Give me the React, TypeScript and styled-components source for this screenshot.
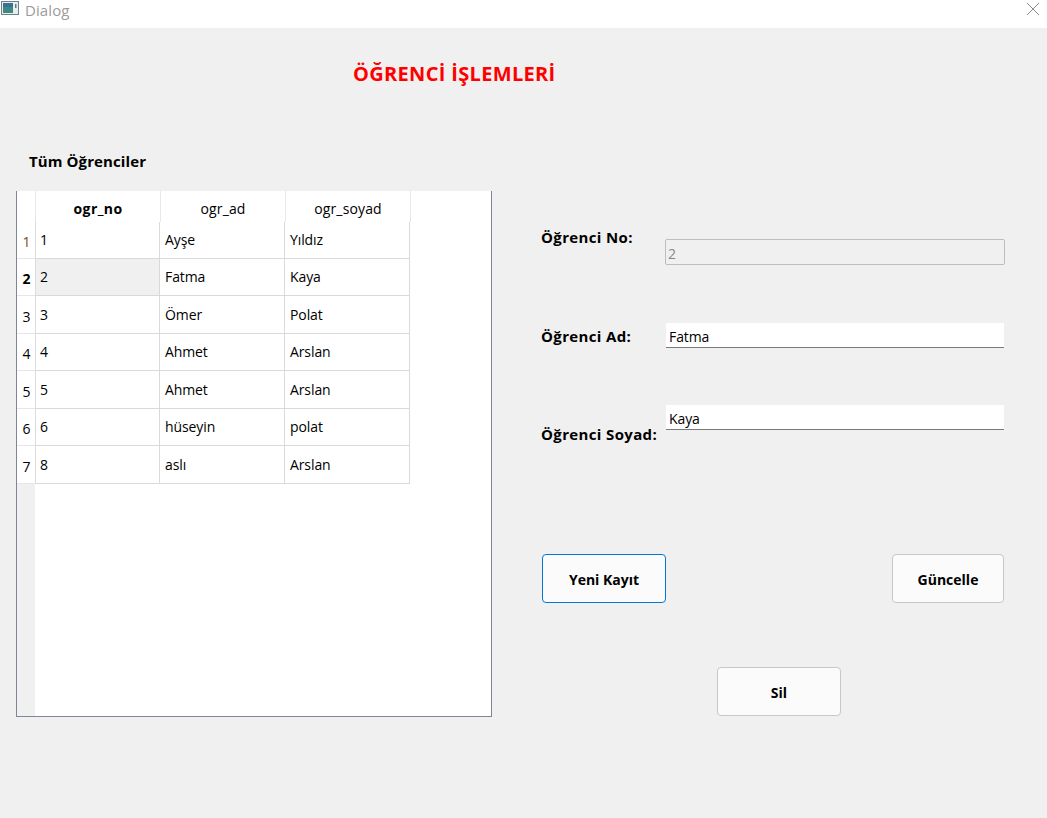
import React from "react";
import styled, { createGlobalStyle } from "styled-components";

const Global = createGlobalStyle`
  html, body { margin: 0; padding: 0; background: #f0f0f0; }
  body { font-family: "Open Sans", "Noto Sans", sans-serif; color: #000; }
`;

const Window = styled.div`
  width: 1047px;
  height: 818px;
  overflow: hidden;
  display: flex;
  flex-direction: column;
  background: #f0f0f0;
`;

const TitleBar = styled.div`
  height: 28px;
  flex: none;
  background: #fff;
  display: flex;
  align-items: flex-start;
  padding: 0 7px 0 1px;
  box-sizing: border-box;
`;

const AppIcon = styled.svg`
  width: 19px;
  height: 16px;
  margin-top: 0;
  flex: none;
`;

const TitleText = styled.div`
  font-size: 15px;
  line-height: 20px;
  color: #9c9c9c;
  margin-left: 5px;
  letter-spacing: 0.1px;
`;

const CloseIcon = styled.svg`
  width: 14px;
  height: 14px;
  margin-left: auto;
  margin-top: 2px;
`;

const Heading = styled.h1`
  margin: 32px 0 0 353px;
  font-size: 20px;
  line-height: 27px;
  font-weight: 700;
  color: #ff0000;
  letter-spacing: 0.33px;
`;

const Main = styled.div`
  display: flex;
  margin-top: 64px;
  padding-left: 16px;
`;

const LeftColumn = styled.section`
  width: 476px;
  flex: none;
`;

const SectionLabel = styled.div`
  font-size: 15px;
  line-height: 20px;
  font-weight: 700;
  letter-spacing: 0.1px;
  margin-left: 13px;
  margin-bottom: 20px;
`;

const TableFrame = styled.div`
  width: 476px;
  height: 526px;
  box-sizing: border-box;
  background: #fff;
  border-left: 1px solid #7f8594;
  border-right: 1px solid #7f8594;
  border-bottom: 1px solid #7f8594;
  display: flex;
`;

const RowHeader = styled.div`
  width: 18px;
  flex: none;
  background: #f0f0f0;
  display: flex;
  flex-direction: column;
`;

const HeaderCorner = styled.div`
  height: 31px;
  background: #fff;
`;

const RowNumber = styled.div<{ $h: number; $current?: boolean; $orange?: boolean }>`
  height: ${(p) => p.$h}px;
  box-sizing: border-box;
  background: #fff;
  border-bottom: 1px solid #e6e6e6;
  font-size: 14px;
  font-weight: ${(p) => (p.$current ? 700 : 400)};
  color: ${(p) => (p.$orange ? "#7a4a10" : "#000")};
  display: flex;
  align-items: center;
  justify-content: center;
  padding: 3px 0 0 1px;
`;

const Grid = styled.div`
  display: flex;
  flex-direction: column;
  width: 376px;
`;

const HeaderRow = styled.div`
  display: grid;
  grid-template-columns: 125px 125px 126px;
  height: 31px;
`;

const HeaderCell = styled.div<{ $active?: boolean }>`
  border-left: 1px solid #e8e8e8;
  font-size: 14px;
  font-weight: ${(p) => (p.$active ? 700 : 400)};
  letter-spacing: ${(p) => (p.$active ? 0.4 : 0.15)}px;
  display: flex;
  align-items: center;
  justify-content: center;
  padding-top: 3px;
  &:last-child {
    border-right: 1px solid #e8e8e8;
  }
`;

const DataRow = styled.div<{ $h: number }>`
  display: grid;
  grid-template-columns: 124px 125px 125px;
  height: ${(p) => p.$h}px;
  border-left: 1px solid #dcdcdc;
  box-sizing: border-box;
`;

const DataCell = styled.div<{ $selected?: boolean; $first?: boolean }>`
  box-sizing: border-box;
  border-right: 1px solid #d9d9d9;
  border-bottom: 1px solid #d9d9d9;
  background: ${(p) => (p.$selected ? "#f0f0f0" : "#fff")};
  font-size: 14px;
  letter-spacing: -0.1px;
  display: flex;
  align-items: center;
  padding: 0 0 1px ${(p) => (p.$first ? 4 : 5)}px;
`;

const RightColumn = styled.section`
  margin-left: 49px;
  margin-top: 88px;
  width: 464px;
  display: flex;
  flex-direction: column;
`;

const FieldRow = styled.div<{ $top: number }>`
  display: flex;
  align-items: flex-start;
  margin-top: ${(p) => p.$top}px;
  height: 26px;
`;

const FieldLabel = styled.label<{ $offset: number }>`
  width: 124px;
  flex: none;
  font-size: 15px;
  line-height: 20px;
  font-weight: 700;
  letter-spacing: 0.36px;
  white-space: nowrap;
  transform: translateY(${(p) => p.$offset}px);
`;

const LineInput = styled.input`
  width: 338px;
  height: 25px;
  margin: 0 0 0 1px;
  padding: 2px 3px 0;
  box-sizing: border-box;
  border: none;
  border-bottom: 1px solid #7a7a7a;
  background: #fff;
  font: 14px "Open Sans", "Noto Sans", sans-serif;
  letter-spacing: -0.1px;
  color: #000;
  outline: none;
`;

const DisabledInput = styled.input`
  width: 340px;
  height: 26px;
  margin: 0;
  padding: 3px 2px 0;
  box-sizing: border-box;
  border: 1px solid #bdbdbd;
  border-radius: 2px;
  background: #f0f0f0;
  font: 14px "Open Sans", "Noto Sans", sans-serif;
  color: #8a8a8a;
  outline: none;
`;

const ButtonRow = styled.div`
  display: flex;
  justify-content: space-between;
  margin-top: 123px;
  padding-left: 1px;
  width: 463px;
  box-sizing: border-box;
`;

const SoloRow = styled.div`
  margin-top: 64px;
  padding-left: 176px;
`;

const PushButton = styled.button<{ $w: number; $focus?: boolean }>`
  width: ${(p) => p.$w}px;
  height: 49px;
  box-sizing: border-box;
  border: 1px solid ${(p) => (p.$focus ? "#0078d4" : "#c8c8c8")};
  border-radius: 4px;
  background: #fbfbfb;
  font: 700 14px "Open Sans", "Noto Sans", sans-serif;
  color: #000;
  padding: 1px 0 0;
`;

const rows = [
  ["1", "Ayşe", "Yıldız"],
  ["2", "Fatma", "Kaya"],
  ["3", "Ömer", "Polat"],
  ["4", "Ahmet", "Arslan"],
  ["5", "Ahmet", "Arslan"],
  ["6", "hüseyin", "polat"],
  ["8", "aslı", "Arslan"],
];
const heights = [37, 37, 38, 37, 38, 37, 38];

export default function App() {
  return (
    <Window>
      <Global />
      <TitleBar>
        <AppIcon viewBox="0 0 19 16">
          <rect x="0.5" y="1.5" width="17" height="13" fill="#e8eef0" stroke="#6f7f88" />
          <rect x="2" y="3" width="10" height="10" fill="#3f8a80" />
          <rect x="2" y="3" width="10" height="4" fill="#3a6f9a" />
          <rect x="14" y="4" width="1.5" height="4" fill="#4a8a70" />
        </AppIcon>
        <TitleText>Dialog</TitleText>
        <CloseIcon viewBox="0 0 14 14">
          <path d="M1 1 L13 13 M13 1 L1 13" stroke="#8c8c8c" strokeWidth="1" fill="none" />
        </CloseIcon>
      </TitleBar>
      <Heading>ÖĞRENCİ İŞLEMLERİ</Heading>
      <Main>
        <LeftColumn>
          <SectionLabel>Tüm Öğrenciler</SectionLabel>
          <TableFrame>
            <RowHeader>
              <HeaderCorner />
              {heights.map((h, i) => (
                <RowNumber key={i} $h={h} $current={i === 1} $orange={i === 0}>
                  {i + 1}
                </RowNumber>
              ))}
            </RowHeader>
            <Grid>
              <HeaderRow>
                <HeaderCell $active>ogr_no</HeaderCell>
                <HeaderCell>ogr_ad</HeaderCell>
                <HeaderCell>ogr_soyad</HeaderCell>
              </HeaderRow>
              {rows.map((r, i) => (
                <DataRow key={i} $h={heights[i]}>
                  {r.map((c, j) => (
                    <DataCell key={j} $first={j === 0} $selected={i === 1 && j === 0}>
                      {c}
                    </DataCell>
                  ))}
                </DataRow>
              ))}
            </Grid>
          </TableFrame>
        </LeftColumn>
        <RightColumn>
          <FieldRow $top={0}>
            <FieldLabel $offset={-12}>Öğrenci No:</FieldLabel>
            <DisabledInput disabled value="2" readOnly />
          </FieldRow>
          <FieldRow $top={58}>
            <FieldLabel $offset={3}>Öğrenci Ad:</FieldLabel>
            <LineInput value="Fatma" readOnly />
          </FieldRow>
          <FieldRow $top={56}>
            <FieldLabel $offset={19}>Öğrenci Soyad:</FieldLabel>
            <LineInput value="Kaya" readOnly />
          </FieldRow>
          <ButtonRow>
            <PushButton $w={124} $focus>Yeni Kayıt</PushButton>
            <PushButton $w={112}>Güncelle</PushButton>
          </ButtonRow>
          <SoloRow>
            <PushButton $w={124}>Sil</PushButton>
          </SoloRow>
        </RightColumn>
      </Main>
    </Window>
  );
}
